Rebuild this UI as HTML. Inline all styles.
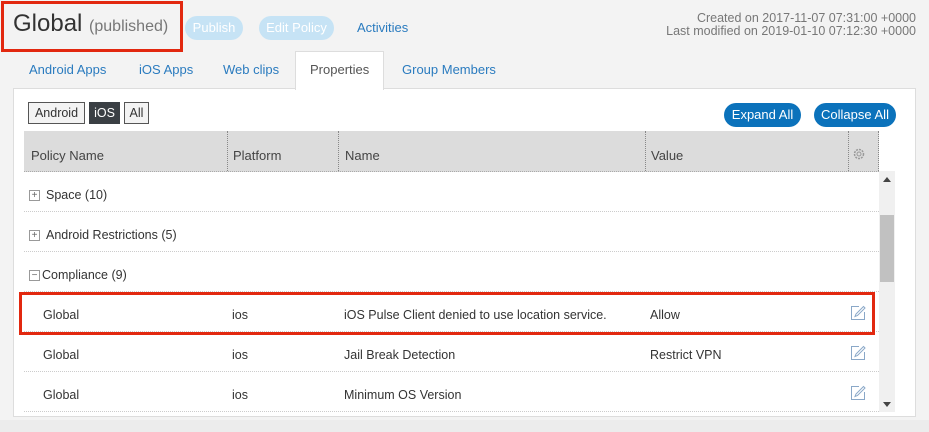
<!DOCTYPE html>
<html><head><style>
body{margin:0;width:929px;height:432px;background:#f3f3f3;font-family:"Liberation Sans",sans-serif;position:relative;overflow:hidden;color:#333}
.a{position:absolute;white-space:nowrap}
.tab{position:absolute;top:62px;font-size:13px;color:#2a7bbf}
.pill{position:absolute;top:16px;height:24px;line-height:24px;border-radius:12px;background:#c6e3f5;color:#fff;font-size:13px;text-align:center}
.bb{position:absolute;top:103px;height:24px;line-height:24px;border-radius:12px;background:#0b72bb;color:#fff;font-size:13px;text-align:center}
.th{position:absolute;top:148px;font-size:13px;color:#444}
.vd{position:absolute;top:131px;height:40px;border-left:1px dotted #888}
.row{position:absolute;left:24px;width:855px;border-bottom:1px dotted #ccc;height:39px}
.t{position:absolute;font-size:12.5px;color:#333;top:308px}
.box{position:absolute;width:9px;height:9px;border:1px solid #999;font-size:10px;line-height:9px;text-align:center;color:#666}
.ed{position:absolute;left:850px}
</style></head><body>
<div class="a" style="left:1px;top:1px;width:176px;height:45px;border:3px solid #e2280f"></div>
<div class="a" style="left:13px;top:10px;font-size:24px;color:#333">Global <span style="font-size:16px;color:#777">(published)</span></div>
<div class="pill" style="left:185px;width:58px">Publish</div>
<div class="pill" style="left:259px;width:75px">Edit Policy</div>
<div class="a" style="left:357px;top:20px;font-size:13px;color:#2a7bbf">Activities</div>
<div class="a" style="right:13px;top:12px;font-size:12.5px;color:#777;text-align:right;line-height:13px">Created on 2017-11-07 07:31:00 +0000<br>Last modified on 2019-01-10 07:12:30 +0000</div>
<div class="a" style="left:13px;top:88px;width:901px;height:327px;background:#fff;border:1px solid #ddd"></div>
<div class="a" style="left:295px;top:51px;width:87px;height:38px;background:#fff;border:1px solid #ddd;border-bottom:none"></div>
<div class="tab" style="left:29px">Android Apps</div>
<div class="tab" style="left:139px">iOS Apps</div>
<div class="tab" style="left:223px">Web clips</div>
<div class="tab" style="left:310px;color:#555">Properties</div>
<div class="tab" style="left:402px">Group Members</div>
<div class="a" style="left:28px;top:102px;width:55px;height:20px;border:1px solid #555;background:#f3f3f3;font-size:12.5px;line-height:20px;text-align:center">Android</div>
<div class="a" style="left:89px;top:102px;width:31px;height:22px;background:#3a3f44;color:#fff;font-size:12.5px;line-height:22px;text-align:center">iOS</div>
<div class="a" style="left:124px;top:102px;width:23px;height:20px;border:1px solid #555;background:#f3f3f3;font-size:12.5px;line-height:20px;text-align:center">All</div>
<div class="bb" style="left:724px;width:77px">Expand All</div>
<div class="bb" style="left:814px;width:82px">Collapse All</div>
<div class="a" style="left:24px;top:131px;width:855px;height:40px;background:#dcdcdc;border-bottom:1px dotted #aaa"></div>
<div class="vd" style="left:227px"></div><div class="vd" style="left:338px"></div><div class="vd" style="left:645px"></div><div class="vd" style="left:848px"></div><div class="vd" style="left:878px"></div>
<div class="th" style="left:31px">Policy Name</div><div class="th" style="left:233px">Platform</div><div class="th" style="left:345px">Name</div><div class="th" style="left:651px">Value</div>
<svg class="a" style="left:853px;top:148px" width="12" height="12" viewBox="0 0 12 12"><circle cx="6" cy="6" r="4.5" fill="none" stroke="#999" stroke-width="1.5" stroke-dasharray="2 1"/><circle cx="6" cy="6" r="2" fill="none" stroke="#999"/></svg>
<div class="a" style="left:879px;top:171px;width:16px;height:241px;background:#f0f0f0"></div>
<div class="a" style="left:880px;top:215px;width:14px;height:67px;background:#c1c1c1"></div>
<div class="a" style="left:883px;top:177px;border:4px solid transparent;border-bottom:5px solid #444;border-top:none"></div>
<div class="a" style="left:883px;top:402px;border:4px solid transparent;border-top:5px solid #444;border-bottom:none"></div>
<div class="row" style="top:172px"></div><div class="row" style="top:212px"></div><div class="row" style="top:252px"></div><div class="row" style="top:292px"></div><div class="row" style="top:332px"></div><div class="row" style="top:372px"></div>
<div class="box" style="left:29px;top:190px">+</div><div class="t" style="left:46px;top:188px">Space (10)</div>
<div class="box" style="left:29px;top:230px">+</div><div class="t" style="left:46px;top:228px">Android Restrictions (5)</div>
<div class="box" style="left:29px;top:270px">−</div><div class="t" style="left:42px;top:268px">Compliance (9)</div>
<div class="a" style="left:19px;top:292px;width:850px;height:37px;border:3px solid #e2280f"></div>
<div class="t" style="left:43px;top:308px">Global</div><div class="t" style="left:232px">ios</div><div class="t" style="left:344px">iOS Pulse Client denied to use location service.</div><div class="t" style="left:650px">Allow</div>
<div class="t" style="left:43px;top:348px">Global</div><div class="t" style="left:232px;top:348px">ios</div><div class="t" style="left:344px;top:348px">Jail Break Detection</div><div class="t" style="left:650px;top:348px">Restrict VPN</div>
<div class="t" style="left:43px;top:388px">Global</div><div class="t" style="left:232px;top:388px">ios</div><div class="t" style="left:344px;top:388px">Minimum OS Version</div>
<svg class="ed" style="top:305px" width="16" height="16" viewBox="0 0 16 16"><path d="M9 1.5H1.5v13h13V7" fill="none" stroke="#8aa8c8"/><path d="M13.5 1.5l1.5 1.5-7.5 7.5-2.5 1 1-2.5z" fill="none" stroke="#8aa8c8"/></svg>
<svg class="ed" style="top:345px" width="16" height="16" viewBox="0 0 16 16"><path d="M9 1.5H1.5v13h13V7" fill="none" stroke="#8aa8c8"/><path d="M13.5 1.5l1.5 1.5-7.5 7.5-2.5 1 1-2.5z" fill="none" stroke="#8aa8c8"/></svg>
<svg class="ed" style="top:385px" width="16" height="16" viewBox="0 0 16 16"><path d="M9 1.5H1.5v13h13V7" fill="none" stroke="#8aa8c8"/><path d="M13.5 1.5l1.5 1.5-7.5 7.5-2.5 1 1-2.5z" fill="none" stroke="#8aa8c8"/></svg>
<div class="a" style="left:0;top:420px;width:929px;height:12px;background:#ececec"></div>
</body></html>
